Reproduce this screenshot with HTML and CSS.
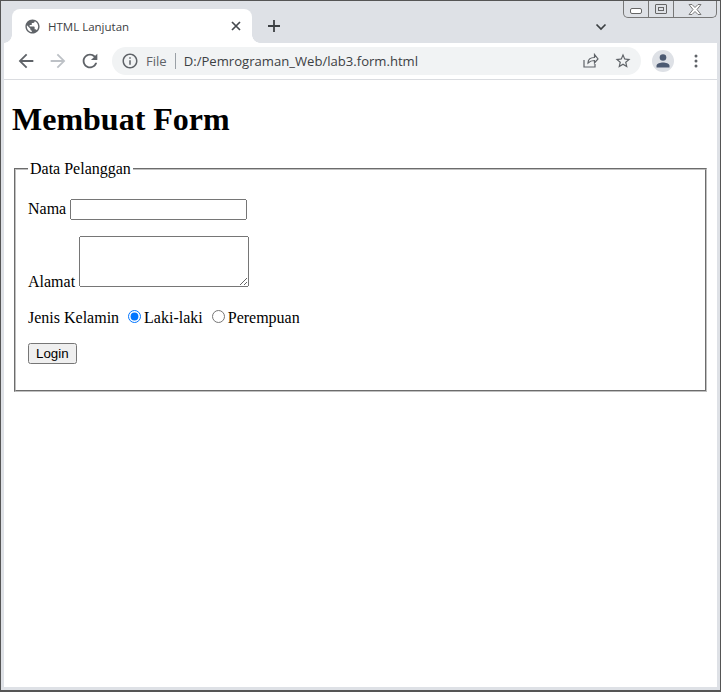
FILE: index.html
```html
<!DOCTYPE html>
<html lang="en">
<head>
    <meta charset="UTF-8">
    <title>HTML Lanjutan</title>
    <link rel="stylesheet" href="styles.css">
</head>
<body>
    <div class="window">
        <div class="window-controls">
            <span class="win-btn win-min"><i></i></span>
            <span class="win-btn win-max"><i></i></span>
            <span class="win-btn win-close">
                <svg width="18" height="11" viewBox="0 0 18 11"><path d="M3 .5h3L9 3.500 12 .5h3l-4 5 4 5h-3L9 7.500 6 10.500H3l4-5z" fill="#fff" stroke="#777" stroke-width="1"/></svg>
            </span>
        </div>

        <div class="tabstrip">
            <div class="tab">
                <svg class="tab-icon" width="17" height="17" viewBox="0 0 24 24"><path fill="#5f6368" d="M12 2C6.48 2 2 6.48 2 12s4.48 10 10 10 10-4.48 10-10S17.52 2 12 2zm-1 17.93c-3.95-.49-7-3.85-7-7.93 0-.62.08-1.21.21-1.79L9 15v1c0 1.1.9 2 2 2v1.93zm6.9-2.54c-.26-.81-1-1.39-1.9-1.39h-1v-3c0-.55-.45-1-1-1H8v-2h2c.55 0 1-.45 1-1V7h2c1.1 0 2-.9 2-2v-.41c2.93 1.19 5 4.06 5 7.41 0 2.08-.8 3.97-2.1 5.39z"/></svg>
                <span class="tab-title">HTML Lanjutan</span>
                <svg class="tab-close" width="10" height="10" viewBox="0 0 10 10"><path d="M1 1l8 8M9 1l-8 8" stroke="#45494e" stroke-width="1.7"/></svg>
            </div>
            <svg class="new-tab" width="12" height="12" viewBox="0 0 12 12"><path d="M6 0v12M0 6h12" stroke="#3c4043" stroke-width="1.8"/></svg>
            <svg class="tab-search" width="12" height="8" viewBox="0 0 12 8"><path d="M1.500 1.500L6 6l4.500-4.500" fill="none" stroke="#3c4043" stroke-width="1.7"/></svg>
        </div>

        <div class="toolbar">
            <span class="tool-btn">
                <svg width="22" height="22" viewBox="0 0 24 24"><path fill="#5f6368" d="M20 11H7.83l5.59-5.59L12 4l-8 8 8 8 1.41-1.41L7.83 13H20v-2z"/></svg>
            </span>
            <span class="tool-btn">
                <svg width="22" height="22" viewBox="0 0 24 24"><path fill="#bdc1c6" d="M4 11h12.17l-5.59-5.59L12 4l8 8-8 8-1.41-1.41L16.17 13H4v-2z"/></svg>
            </span>
            <span class="tool-btn">
                <svg width="22" height="22" viewBox="0 0 24 24"><path fill="#5f6368" d="M17.65 6.35C16.2 4.9 14.21 4 12 4c-4.42 0-7.99 3.58-7.99 8s3.57 8 7.99 8c3.73 0 6.84-2.55 7.73-6h-2.08c-.82 2.33-3.04 4-5.65 4-3.31 0-6-2.69-6-6s2.69-6 6-6c1.66 0 3.14.69 4.22 1.78L13 11h7V4l-2.35 2.35z"/></svg>
            </span>
            <div class="omnibox">
                <svg class="info-icon" width="18" height="18" viewBox="0 0 24 24"><path fill="#5f6368" d="M11 7h2v2h-2zm0 4h2v6h-2zm1-9C6.48 2 2 6.48 2 12s4.48 10 10 10 10-4.48 10-10S17.52 2 12 2zm0 18c-4.41 0-8-3.59-8-8s3.59-8 8-8 8 3.59 8 8-3.59 8-8 8z"/></svg>
                <span class="scheme">File</span>
                <span class="divider"></span>
                <span class="url">D:/Pemrograman_Web/lab3.form.html</span>
                <svg class="share-icon" width="16" height="15" viewBox="0 0 16 15"><path d="M1 7v7h11v-3M5 10c0-4 3-5.500 6.500-5.500V1.500L15 6l-3.500 4V7.500C9 7.500 7 8 5 10z" fill="none" stroke="#5f6368" stroke-width="1.200"/></svg>
                <svg class="star-icon" width="18" height="18" viewBox="0 0 24 24"><path fill="#5f6368" d="M22 9.24l-7.19-.62L12 2 9.19 8.63 2 9.24l5.46 4.73L5.82 21 12 17.27 18.18 21l-1.63-7.03L22 9.24zM12 15.4l-3.76 2.27 1-4.28-3.32-2.88 4.38-.38L12 6.1l1.71 4.04 4.38.38-3.32 2.88 1 4.28L12 15.4z"/></svg>
            </div>
            <span class="tool-btn avatar-btn">
                <span class="avatar">
                    <svg width="16" height="16" viewBox="0 0 16 16"><circle cx="8" cy="4.500" r="3.300" fill="#4c5a72"/><path d="M1.500 14.500v-1.700c0-2.300 4-3.300 6.500-3.300s6.500 1 6.500 3.300v1.700z" fill="#4c5a72"/></svg>
                </span>
            </span>
            <span class="tool-btn dots-btn">
                <svg width="4" height="14" viewBox="0 0 4 14"><circle cx="2" cy="2" r="1.500" fill="#5f6368"/><circle cx="2" cy="7" r="1.500" fill="#5f6368"/><circle cx="2" cy="12" r="1.500" fill="#5f6368"/></svg>
            </span>
        </div>

        <div class="page">
            <h1>Membuat Form</h1>
            <form>
                <fieldset>
                    <legend>Data Pelanggan</legend>
                    <p>Nama <input type="text" class="name-input"></p>
                    <p>Alamat <textarea class="address-input"></textarea></p>
                    <p>Jenis Kelamin
                        <input type="radio" name="jk" checked>Laki-laki
                        <input type="radio" name="jk">Perempuan
                    </p>
                    <p><input type="submit" value="Login" class="login-btn"></p>
                </fieldset>
            </form>
        </div>
    </div>
</body>
</html>
```

FILE: styles.css
```css
*{
    box-sizing: border-box;
}
html, body{
    margin: 0;
    padding: 0;
    height: 100%;
}
.window{
    position: relative;
    width: 721px;
    height: 692px;
    display: flex;
    flex-direction: column;
    background-color: #dee1e6;
    border: 1px solid #555;
    border-bottom-width: 2px;
    padding: 0 3px 3px 3px;
}

/* window buttons */
.window-controls{
    position: absolute;
    top: 0;
    right: 3px;
    display: flex;
    height: 17px;
    border: 1px solid #777;
    border-top: 0;
    border-radius: 0 0 5px 5px;
}
.win-btn{
    display: flex;
    align-items: center;
    justify-content: center;
    border-right: 1px solid #777;
}
.win-btn:last-child{
    border-right: 0;
}
.win-min{
    width: 25px;
}
.win-max{
    width: 25px;
}
.win-close{
    width: 42px;
}
.win-min i{
    display: block;
    width: 12px;
    height: 6px;
    margin-top: 4px;
    border: 1px solid #666;
    border-radius: 2px;
    background-color: #fff;
}
.win-max i{
    display: block;
    width: 12px;
    height: 10px;
    border: 1px solid #666;
    border-radius: 1px;
    box-shadow: inset 0 0 0 2px #dee1e6, inset 0 0 0 3px #666;
}

/* tabs */
.tabstrip{
    display: flex;
    align-items: flex-end;
    height: 42px;
    flex: none;
    position: relative;
    padding-left: 8px;
}
.tab{
    position: relative;
    display: flex;
    align-items: center;
    width: 240px;
    height: 34px;
    background-color: #fff;
    border-radius: 8px 8px 0 0;
    padding: 0 11px 0 12px;
}
.tab::before,
.tab::after{
    content: "";
    position: absolute;
    bottom: 0;
    width: 8px;
    height: 8px;
}
.tab::before{
    left: -8px;
    background: radial-gradient(circle at 0 0, #dee1e6 7.500px, #fff 8px);
}
.tab::after{
    right: -8px;
    background: radial-gradient(circle at 100% 0, #dee1e6 7.500px, #fff 8px);
}
.tab-title{
    margin-left: 7px;
    flex: 1;
    font-family: "Open Sans", sans-serif;
    font-size: 11.500px;
    color: #3c4043;
}
.new-tab{
    margin: 0 0 11px 16px;
}
.tab-search{
    position: absolute;
    right: 110px;
    top: 22px;
}

/* toolbar */
.toolbar{
    display: flex;
    align-items: center;
    flex: none;
    height: 37px;
    padding: 0 4px 1px 6px;
    background-color: #fff;
    border-bottom: 1px solid #dadce0;
}
.tool-btn{
    display: flex;
    align-items: center;
    justify-content: center;
    width: 32px;
    height: 28px;
    flex: none;
}
.dots-btn{
    padding-left: 2px;
}
.omnibox{
    display: flex;
    align-items: center;
    width: 529px;
    height: 28px;
    margin: 0 6px;
    padding: 0 9px;
    border-radius: 14px;
    background-color: #f1f3f4;
    font-family: "Open Sans", sans-serif;
    font-size: 13.100px;
    flex: none;
}
.scheme{
    margin-left: 7px;
    color: #5f6368;
}
.divider{
    width: 1px;
    height: 16px;
    margin: 0 8px;
    background-color: #9aa0a6;
}
.url{
    flex: 1;
    color: #3c4043;
}
.share-icon{
    margin-right: 15px;
}
.avatar{
    display: flex;
    align-items: center;
    justify-content: center;
    width: 22px;
    height: 22px;
    border-radius: 50%;
    background-color: #dee1e6;
}

/* page */
.page{
    flex: 1;
    background-color: #fff;
    padding: 0 8px;
    font-family: "Liberation Serif", serif;
    font-size: 16px;
    color: #000;
    overflow: hidden;
}
.page h1{
    font-size: 32px;
    margin: 21.440px 0;
}
.page fieldset{
    margin: 0 2px;
    padding: 0.35em 0.75em 0.625em;
    border: 2px groove #c0c0c0;
}
.page p{
    margin: 16px 0;
}
.name-input{
    width: 177px;
    height: 21px;
}
.address-input{
    width: 170px;
    height: 51px;
}
.login-btn{
    font-family: "Liberation Sans", sans-serif;
    font-size: 13.333px;
}
```
